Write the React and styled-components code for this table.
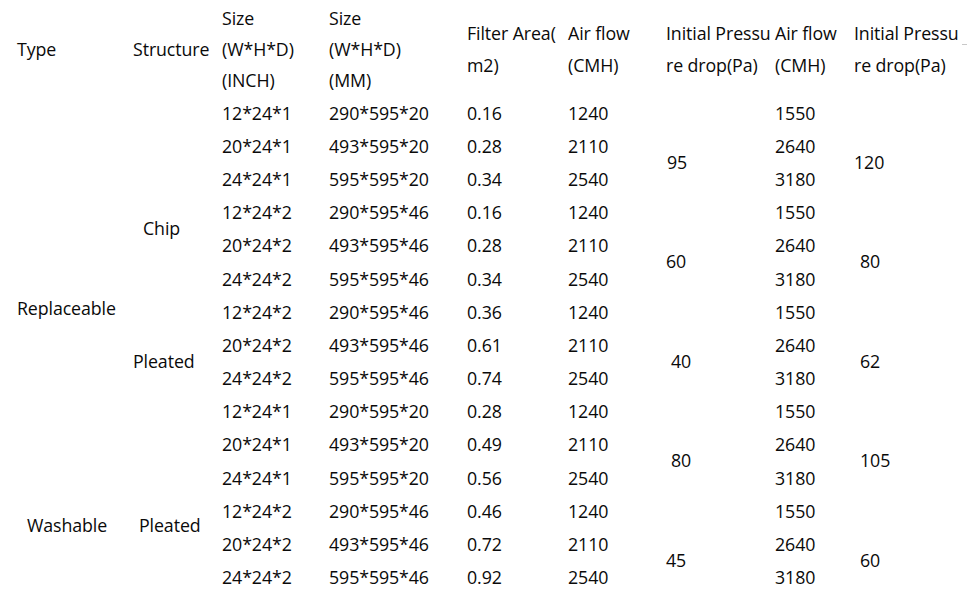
import * as React from "react"
import styled, { createGlobalStyle } from "styled-components"

const GlobalStyle = createGlobalStyle`
  html, body {
    margin: 0;
    padding: 0;
    background: #ffffff;
  }
  body {
    font-family: "Open Sans", "Noto Sans", "Liberation Sans", sans-serif;
    color: #0a0a0a;
  }
`

const Page = styled.div`
  width: 978px;
  height: 596px;
  overflow: hidden;
  position: relative;
`

const Table = styled.div`
  display: grid;
  grid-template-columns: 116px 89px 107px 138px 101px 98px 109px 79px 1fr;
  grid-template-rows: 96px repeat(15, 33.2px);
  padding-left: 17px;
  font-size: 17.8px;
  letter-spacing: -0.1px;
`

const Head = styled.div`
  grid-row: 1;
  grid-column: ${(p) => p.$col};
  display: flex;
  flex-direction: column;
  justify-content: center;
  padding-top: 2px;
  line-height: ${(p) => (p.$tight ? "31px" : "32px")};
  white-space: nowrap;
`

const Cell = styled.div`
  grid-column: ${(p) => p.$col};
  grid-row: ${(p) => p.$row + 1} / span ${(p) => p.$span || 1};
  display: flex;
  align-items: center;
  white-space: nowrap;
  padding-left: ${(p) => p.$indent || 0}px;
  transform: translateY(${(p) => p.$shift || 0}px);
`

const Dash = styled.span`
  position: absolute;
  left: 962px;
  top: 44px;
  width: 5px;
  height: 1px;
  background: #c8c8c8;
`

const rows = [
  ["12*24*1", "290*595*20", "0.16", "1240", "1550"],
  ["20*24*1", "493*595*20", "0.28", "2110", "2640"],
  ["24*24*1", "595*595*20", "0.34", "2540", "3180"],
  ["12*24*2", "290*595*46", "0.16", "1240", "1550"],
  ["20*24*2", "493*595*46", "0.28", "2110", "2640"],
  ["24*24*2", "595*595*46", "0.34", "2540", "3180"],
  ["12*24*2", "290*595*46", "0.36", "1240", "1550"],
  ["20*24*2", "493*595*46", "0.61", "2110", "2640"],
  ["24*24*2", "595*595*46", "0.74", "2540", "3180"],
  ["12*24*1", "290*595*20", "0.28", "1240", "1550"],
  ["20*24*1", "493*595*20", "0.49", "2110", "2640"],
  ["24*24*1", "595*595*20", "0.56", "2540", "3180"],
  ["12*24*2", "290*595*46", "0.46", "1240", "1550"],
  ["20*24*2", "493*595*46", "0.72", "2110", "2640"],
  ["24*24*2", "595*595*46", "0.92", "2540", "3180"],
]

// columns of each row: inch, mm, area, flow, flow2
const dataCols = [3, 4, 5, 6, 8]

const pressures = [
  { row: 1, a: "95", b: "120", ia: 1, ib: 0 },
  { row: 4, a: "60", b: "80", ia: 0, ib: 6 },
  { row: 7, a: "40", b: "62", ia: 5, ib: 6 },
  { row: 10, a: "80", b: "105", ia: 5, ib: 6 },
  { row: 13, a: "45", b: "60", ia: 0, ib: 6 },
]

export default function App() {
  return (
    <Page>
      <GlobalStyle />
      <Table>
        <Head $col={1}><span>Type</span></Head>
        <Head $col={2}><span>Structure</span></Head>
        <Head $col={3} $tight>
          <span>Size</span>
          <span>(W*H*D)</span>
          <span>(INCH)</span>
        </Head>
        <Head $col={4} $tight>
          <span>Size</span>
          <span>(W*H*D)</span>
          <span>(MM)</span>
        </Head>
        <Head $col={5}>
          <span>Filter Area(</span>
          <span>m2)</span>
        </Head>
        <Head $col={6}>
          <span>Air flow</span>
          <span>(CMH)</span>
        </Head>
        <Head $col={7}>
          <span>Initial Pressu</span>
          <span>re drop(Pa)</span>
        </Head>
        <Head $col={8}>
          <span>Air flow</span>
          <span>(CMH)</span>
        </Head>
        <Head $col={9}>
          <span>Initial Pressu</span>
          <span>re drop(Pa)</span>
        </Head>

        <Cell $col={1} $row={1} $span={9} $shift={63}>Replaceable</Cell>
        <Cell $col={1} $row={10} $span={6} $shift={31} $indent={10}>Washable</Cell>
        <Cell $col={2} $row={1} $span={6} $shift={32} $indent={10}>Chip</Cell>
        <Cell $col={2} $row={7} $span={3} $shift={16}>Pleated</Cell>
        <Cell $col={2} $row={10} $span={6} $shift={31} $indent={6}>Pleated</Cell>

        {rows.map((r, i) =>
          r.map((v, j) => (
            <Cell key={`${i}-${j}`} $col={dataCols[j]} $row={i + 1}>
              {v}
            </Cell>
          ))
        )}

        {pressures.map((p) => (
          <React.Fragment key={p.row}>
            <Cell $col={7} $row={p.row} $span={3} $shift={16} $indent={p.ia}>
              {p.a}
            </Cell>
            <Cell $col={9} $row={p.row} $span={3} $shift={16} $indent={p.ib}>
              {p.b}
            </Cell>
          </React.Fragment>
        ))}
      </Table>
      <Dash />
    </Page>
  )
}
